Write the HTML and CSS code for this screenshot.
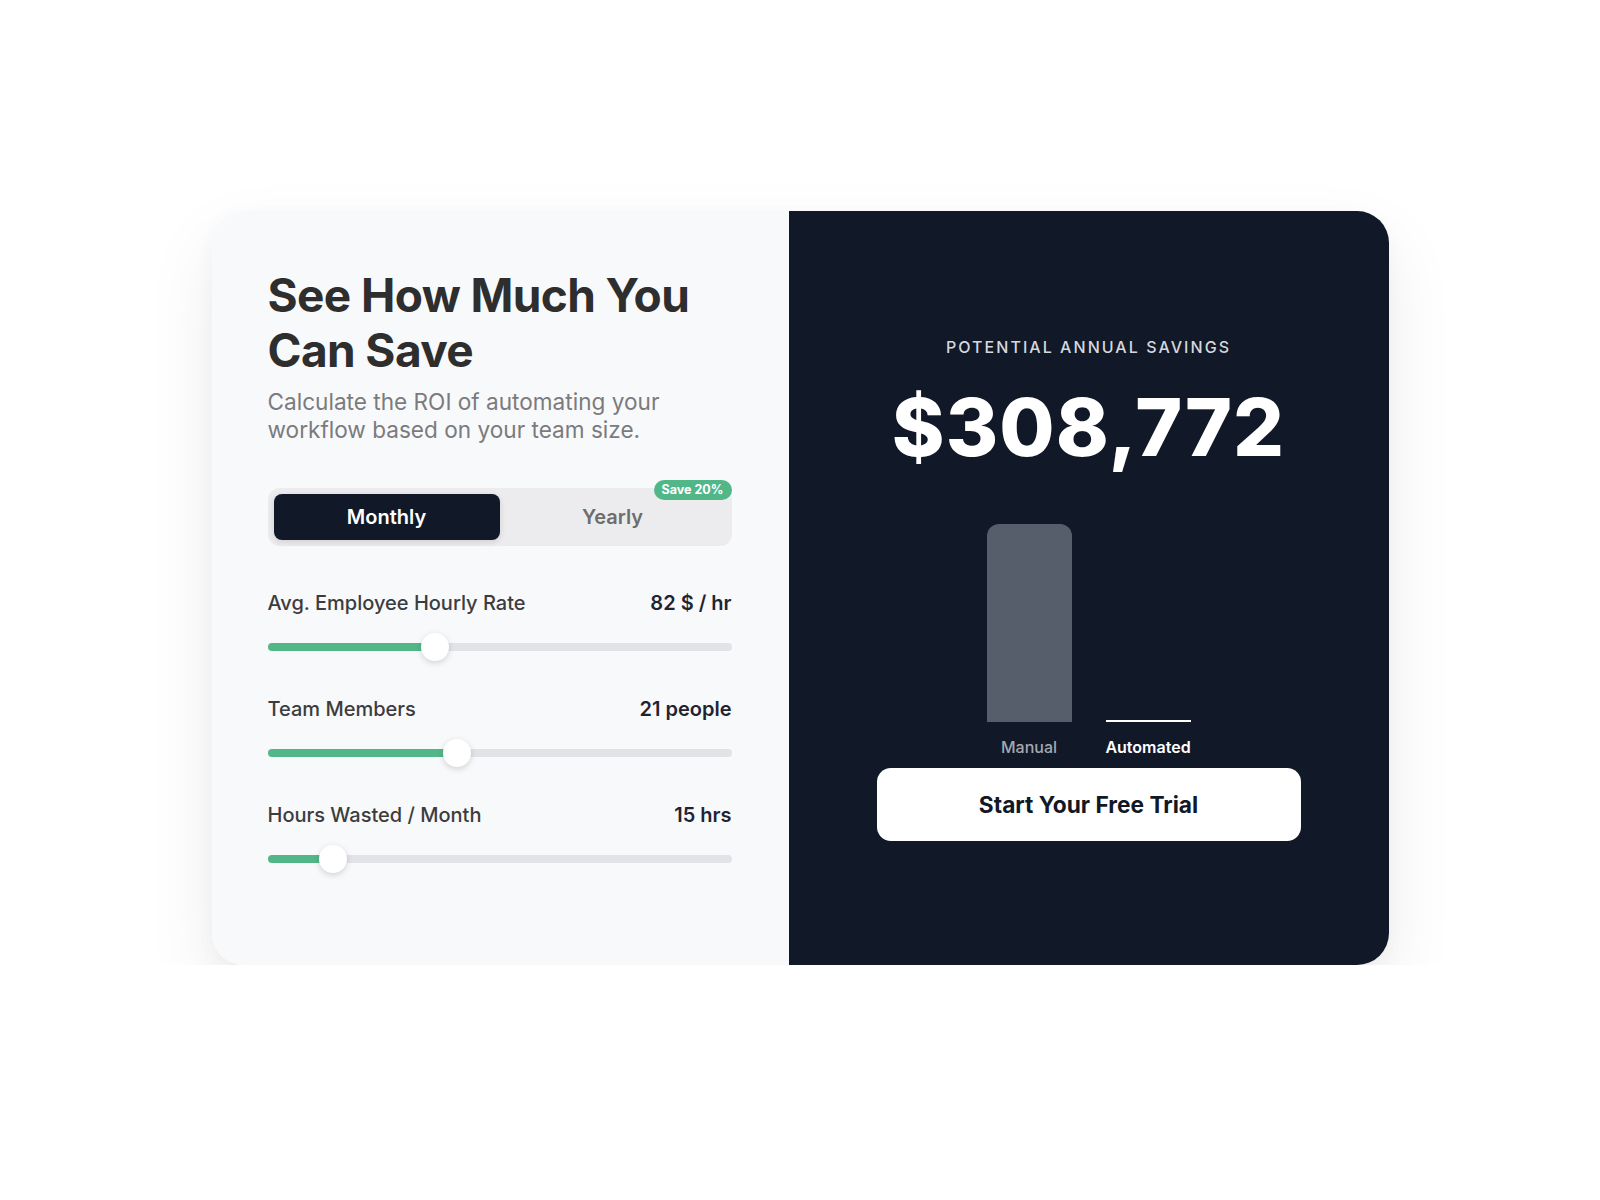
FILE: index.html
```html
<!DOCTYPE html>
<html lang="en">
<head>
<meta charset="utf-8">
<title>ROI Calculator</title>
<link rel="stylesheet" href="styles.css">
</head>
<body>
<main class="page">
  <section class="card">
    <div class="inputs">
      <h1 class="title">See How Much You Can Save</h1>
      <p class="subtitle">Calculate the ROI of automating your workflow based on your team size.</p>

      <div class="toggle">
        <button class="toggle-btn active">Monthly</button>
        <button class="toggle-btn">Yearly</button>
        <span class="badge">Save 20%</span>
      </div>

      <div class="field">
        <div class="field-row">
          <span class="field-label">Avg. Employee Hourly Rate</span>
          <span class="field-value">82 $ / hr</span>
        </div>
        <div class="track"><div class="fill" style="width:36.2%"><span class="thumb"></span></div></div>
      </div>

      <div class="field">
        <div class="field-row">
          <span class="field-label">Team Members</span>
          <span class="field-value">21 people</span>
        </div>
        <div class="track"><div class="fill" style="width:40.9%"><span class="thumb"></span></div></div>
      </div>

      <div class="field">
        <div class="field-row">
          <span class="field-label">Hours Wasted / Month</span>
          <span class="field-value">15 hrs</span>
        </div>
        <div class="track"><div class="fill" style="width:14.2%"><span class="thumb"></span></div></div>
      </div>
    </div>

    <div class="results">
      <div class="eyebrow">POTENTIAL ANNUAL SAVINGS</div>
      <div class="amount">$308,772</div>
      <div class="chart">
        <div class="col">
          <div class="bar-area"><div class="bar bar-manual"></div></div>
          <div class="bar-label muted">Manual</div>
        </div>
        <div class="col">
          <div class="bar-area"><div class="bar bar-auto"></div></div>
          <div class="bar-label strong">Automated</div>
        </div>
      </div>
      <button class="cta">Start Your Free Trial</button>
    </div>
  </section>
</main>
</body>
</html>
```

FILE: styles.css
```css
* { box-sizing: border-box; }

html, body {
  margin: 0;
  padding: 0;
  background: #ffffff;
  font-family: "Inter", "Noto Sans", "Liberation Sans", sans-serif;
}

.page {
  padding-top: 211px;
  display: flex;
  justify-content: center;
}

.card {
  width: 1177px;
  height: 754px;
  display: grid;
  grid-template-columns: 577px 1fr;
  border-radius: 32px;
  overflow: hidden;
  box-shadow: 0 30px 70px rgba(0, 0, 0, 0.08), 0 6px 20px rgba(0, 0, 0, 0.03);
}

/* ---------- left ---------- */
.inputs {
  background: #f8f9fb;
  padding: 57px 57px 56px 56px;
  display: flex;
  flex-direction: column;
}

.title {
  margin: 0;
  font-size: 46px;
  line-height: 55px;
  font-weight: 700;
  color: #2e2e2e;
  letter-spacing: -0.6px;
}

.subtitle {
  margin: 10px 0 0;
  font-size: 22.6px;
  line-height: 27.6px;
  color: #7b7b7d;
  font-weight: 400;
}

.toggle {
  position: relative;
  margin-top: 45px;
  display: grid;
  grid-template-columns: 1fr 1fr;
  padding: 6px;
  background: #ececee;
  border-radius: 12px;
}

.toggle-btn {
  height: 46px;
  border: 0;
  border-radius: 8px;
  background: transparent;
  font-family: inherit;
  font-size: 20px;
  font-weight: 600;
  color: #6d6d70;
}

.toggle-btn.active {
  background: #111827;
  color: #ffffff;
  box-shadow: 0 2px 6px rgba(0, 0, 0, 0.12);
}

.badge {
  position: absolute;
  top: -8px;
  right: 0;
  height: 20px;
  padding: 0 8px;
  border-radius: 10px;
  background: #52b788;
  color: #ffffff;
  font-size: 12.5px;
  font-weight: 700;
  line-height: 20px;
}

.field { margin-top: 43px; }
.field + .field { margin-top: 44px; }

.field-row {
  display: flex;
  justify-content: space-between;
  align-items: center;
  height: 28px;
}

.field-label {
  font-size: 20px;
  font-weight: 500;
  color: #3c3c3e;
}

.field-value {
  font-size: 20px;
  font-weight: 600;
  color: #1f2433;
}

.track {
  margin-top: 26px;
  height: 8px;
  border-radius: 4px;
  background: #e2e3e6;
}

.fill {
  position: relative;
  height: 100%;
  border-radius: 4px;
  background: #52b788;
}

.thumb {
  position: absolute;
  right: -14px;
  top: 50%;
  width: 28px;
  height: 28px;
  margin-top: -14px;
  border-radius: 50%;
  background: #ffffff;
  box-shadow: 0 2px 6px rgba(0, 0, 0, 0.16);
}

/* ---------- right ---------- */
.results {
  background: #111827;
  display: flex;
  flex-direction: column;
  align-items: center;
  justify-content: center;
  padding: 0 88px;
}

.eyebrow {
  font-size: 16px;
  line-height: 24px;
  font-weight: 500;
  letter-spacing: 2.05px;
  color: #d5d8de;
}

.amount {
  margin-top: 28px;
  font-size: 80px;
  line-height: 80px;
  font-weight: 800;
  color: #ffffff;
  letter-spacing: 1.1px;
}

.chart {
  margin-top: 57px;
  display: flex;
  gap: 34px;
}

.col {
  width: 85px;
  display: flex;
  flex-direction: column;
  align-items: center;
}

.bar-area {
  width: 100%;
  height: 198px;
  display: flex;
  align-items: flex-end;
}

.bar { width: 100%; }

.bar-manual {
  height: 198px;
  background: #575e6b;
  border-radius: 12px 12px 0 0;
}

.bar-auto {
  height: 2px;
  background: #ffffff;
}

.bar-label {
  margin-top: 13px;
  font-size: 16px;
  line-height: 24px;
  white-space: nowrap;
}

.bar-label.muted { color: #a3a8b2; font-weight: 500; }
.bar-label.strong { color: #ffffff; font-weight: 600; }

.cta {
  margin-top: 9px;
  width: 424px;
  height: 73px;
  border: 0;
  border-radius: 14px;
  background: #ffffff;
  font-family: inherit;
  font-size: 22.7px;
  font-weight: 700;
  color: #111827;
}
```
